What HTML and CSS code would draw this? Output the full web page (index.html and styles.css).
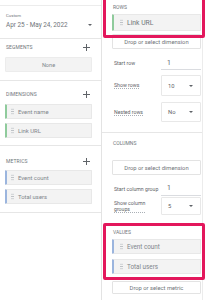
FILE: index.html
```html
<!DOCTYPE html>
<html>
<head>
<meta charset="utf-8">
<link rel="stylesheet" href="styles.css">
</head>
<body>
<div class="page">
  <div class="left">
    <div class="date">
      <div class="date-small">Custom</div>
      <div class="date-row"><span>Apr 25 - May 24, 2022</span><span class="caret"></span></div>
    </div>
    <div class="sec sec-seg">
      <div class="sec-head"><span>SEGMENTS</span><span class="plus"></span></div>
      <div class="none-box">None</div>
    </div>
    <div class="sec sec-dim">
      <div class="sec-head"><span>DIMENSIONS</span><span class="plus"></span></div>
      <div class="chip green"><span class="grip"></span>Event name</div>
      <div class="chip green"><span class="grip"></span>Link URL</div>
    </div>
    <div class="sec sec-met">
      <div class="sec-head"><span>METRICS</span><span class="plus"></span></div>
      <div class="chip blue"><span class="grip"></span>Event count</div>
      <div class="chip blue"><span class="grip"></span>Total users</div>
    </div>
  </div>
  <div class="right">
    <div class="rsec rsec-rows">
      <div class="rlabel">ROWS</div>
      <div class="rchip green tall"><span class="grip"></span>Link URL</div>
      <div class="drop">Drop or select dimension</div>
      <div class="field f-start">
        <span class="flabel">Start row</span>
        <span class="input">1</span>
      </div>
      <div class="field f-show">
        <span class="flabel dotted">Show rows</span>
        <span class="select s-show">10<span class="caret"></span></span>
      </div>
      <div class="field f-nested">
        <span class="flabel dotted">Nested rows</span>
        <span class="select s-nested">No<span class="caret"></span></span>
      </div>
    </div>
    <div class="rsec rsec-cols">
      <div class="rlabel">COLUMNS</div>
      <div class="drop d-cols">Drop or select dimension</div>
      <div class="field f-startcol">
        <span class="flabel">Start column group</span>
        <span class="input narrow">1</span>
      </div>
      <div class="field f-showcol">
        <span class="flabel dotted two">Show column<br>groups</span>
        <span class="select s-col">5<span class="caret"></span></span>
      </div>
      <div class="rlabel l-values">VALUES</div>
      <div class="rchip blue"><span class="grip"></span>Event count</div>
      <div class="rchip blue second"><span class="grip"></span>Total users</div>
      <div class="drop d-met">Drop or select metric</div>
    </div>
  </div>
  <div class="hl hl-rows"></div>
  <div class="hl hl-values"></div>
</div>
</body>
</html>
```
FILE: styles.css
```css
* { box-sizing: border-box; margin: 0; padding: 0; }
html, body { background: #fff; }
body { font-family: Roboto, "Liberation Sans", sans-serif; color: #5f6368; overflow: hidden; }
.page { position: relative; display: flex; width: 209px; height: 300px; }

.left { width: 102px; height: 300px; border-right: 1px solid #e3e3e3; }
.right { width: 101px; height: 300px; border-right: 1px solid #ececec; }

.date { margin-top: 5px; border-top: 1px solid #ececec; border-bottom: 1px solid #e6e6e6; height: 34px; padding: 7px 9px 0 6px; }
.date-small { font-size: 4.3px; line-height: 5px; color: #70757a; }
.date-row { display: flex; justify-content: space-between; align-items: center; font-size: 6.4px; line-height: 8px; margin-top: 3px; color: #70757a; }
.caret { width: 0; height: 0; border-left: 2px solid transparent; border-right: 2px solid transparent; border-top: 2.5px solid #5f6368; display: inline-block; }

.sec { border-bottom: 1px solid #e6e6e6; padding: 0 9px 0 5px; }
.sec-seg { height: 42px; }
.sec-dim { height: 65px; padding-top: 5px; }
.sec-met { height: 67px; padding-top: 7px; }
.sec-head { display: flex; justify-content: space-between; align-items: center; height: 16px; font-size: 5px; letter-spacing: 0.1px; color: #70757a; padding-left: 1px; }
.plus { position: relative; width: 7px; height: 7px; margin-right: 2px; }
.plus::before, .plus::after { content: ""; position: absolute; background: #5f6368; }
.plus::before { left: 3px; top: 0; width: 1px; height: 7px; }
.plus::after { left: 0; top: 3px; width: 7px; height: 1px; }

.none-box { margin-top: 2px; height: 15px; background: #f3f3f3; border: 1px solid #ececec; border-radius: 1px; font-size: 5.6px; color: #80868b; display: flex; align-items: center; justify-content: center; }

.chip { display: flex; align-items: center; height: 15px; background: #f3f3f3; border: 1px solid #e8e8e8; border-radius: 1px; font-size: 5.9px; color: #80868b; margin-top: 4px; }
.sec-head + .chip { margin-top: 2px; }
.sec-met .sec-head + .chip { margin-top: 1px; }
.chip.green, .rchip.green { border-left: 2px solid #8fcb9c; }
.chip.blue, .rchip.blue { border-left: 2px solid #9bb5de; }
.grip { width: 3px; height: 7px; margin: 0 4px 0 4px; background-image: radial-gradient(circle, #bdc1c6 0.6px, transparent 0.7px); background-size: 1.5px 2.33px; flex: none; }

.rsec { padding: 0 1px 0 10px; }
.rlabel { font-size: 5px; line-height: 8px; color: #70757a; padding-left: 1px; }
.rsec-rows { padding-top: 3px; border-bottom: 1px solid #e6e6e6; height: 133px; }
.rchip { display: flex; align-items: center; height: 15px; background: #f3f3f3; border: 1px solid #e8e8e8; border-radius: 1px; font-size: 6.3px; color: #80868b; margin-top: 6px; }
.rchip.tall { height: 17px; margin-top: 3px; font-size: 6.8px; color: #70757a; }
.rchip .grip { margin: 0 4px 0 6px; }
.rchip.second { margin-top: 5px; }
.drop { margin-top: 3px; height: 15px; border: 1px solid #e3e3e3; border-radius: 1px; font-size: 5.8px; color: #70757a; display: flex; align-items: center; justify-content: center; background: #fff; }

.field { display: flex; align-items: center; justify-content: space-between; padding-left: 2px; font-size: 5.2px; color: #5f6368; }
.flabel.dotted { border-bottom: 1px dotted #aab0b6; line-height: 6px; }
.flabel.two { line-height: 6px; }
.input { width: 40px; height: 14px; border-bottom: 1px solid #dadce0; font-size: 6.8px; padding-left: 6px; display: flex; align-items: center; color: #5f6368; }
.select { width: 40px; border: 1px solid #e8e8e8; border-radius: 1px; font-size: 5.8px; padding: 0 7px 0 6px; display: flex; align-items: center; justify-content: space-between; color: #5f6368; }
.f-start { margin-top: 6px; height: 16px; }
.f-show { margin-top: 4px; }
.s-show { height: 21px; }
.f-nested { margin-top: 6px; }
.s-nested { height: 20px; }

.rsec-cols { padding-top: 6px; }
.d-cols { margin-top: 13px; }
.f-startcol { margin-top: 6px; height: 15px; }
.input.narrow { width: 40px; }
.f-showcol { margin-top: 1px; }
.s-col { height: 18px; }
.l-values { margin-top: 13px; }
.rsec-cols .rchip.blue { margin-top: 3px; }
.rsec-cols .rchip.blue.second { margin-top: 5px; }
.d-met { margin-top: 7px; height: 13px; }

.hl { position: absolute; border: 3px solid #e3175c; border-radius: 2px; pointer-events: none; }
.hl-rows { left: 103px; top: -3px; width: 102px; height: 41px; }
.hl-values { left: 103px; top: 223px; width: 102px; height: 57px; }
```
